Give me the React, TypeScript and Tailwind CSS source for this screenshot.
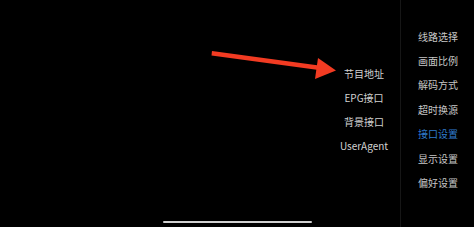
import React from "react";

/* Settings drawer (TV player) — interface submenu, with an annotation arrow. */

const MENU = ["线路选择", "画面比例", "解码方式", "超时换源", "接口设置", "显示设置", "偏好设置"];
const SUB = ["节目地址", "EPG接口", "背景接口", "UserAgent"];

export default function App() {
  return (
    <div
      className="relative flex h-[227px] w-[474px] overflow-hidden bg-black text-[10px]"
      style={{ fontFamily: '"Noto Sans CJK SC", "Noto Sans", sans-serif' }}
    >
      {/* left stage + submenu */}
      <div className="flex flex-1 justify-end pr-[8px]">
        <div className="flex w-[56px] flex-col items-center pt-[61px]">
          {SUB.map((s) => (
            <div key={s} className="flex h-[24px] items-center whitespace-nowrap text-[#d2d2d2]">
              {s}
            </div>
          ))}
        </div>
      </div>

      {/* main menu */}
      <div className="flex w-[74px] flex-col border-l border-[#161616] pl-[17px] pt-[24px]">
        {MENU.map((m) => (
          <div
            key={m}
            className={`flex h-[24.4px] items-center whitespace-nowrap ${
              m === "接口设置" ? "text-[#2f7ccc]" : "text-[#c6c6c6]"
            }`}
          >
            {m}
          </div>
        ))}
      </div>

      {/* annotation arrow */}
      <svg className="pointer-events-none absolute left-0 top-0" width="474" height="227" viewBox="0 0 474 227">
        <path d="M212 51 L319 65.5 L318.5 70 L211.5 55.5 Z" fill="#f23b22" />
        <path d="M318 58 L336 70.5 L315 79 Z" fill="#f23b22" />
      </svg>

      {/* home indicator */}
      <div className="absolute bottom-[4px] left-[163px] h-[2px] w-[149px] rounded-full bg-[#cfcfcf]" />
    </div>
  );
}
